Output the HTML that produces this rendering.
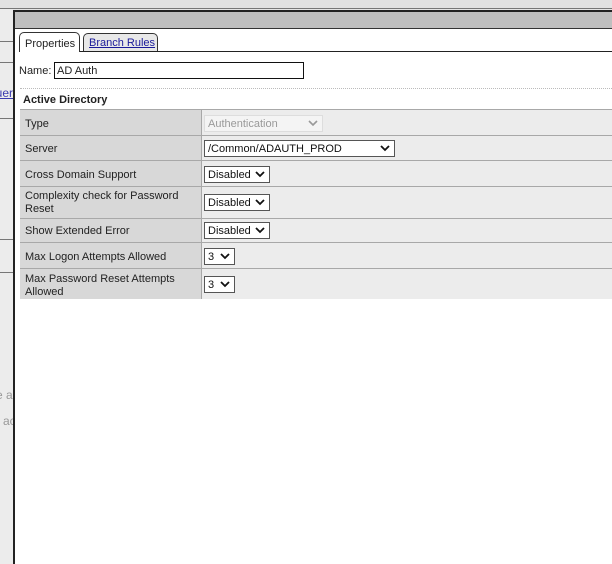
<!DOCTYPE html>
<html><head><style>
*{margin:0;padding:0;box-sizing:border-box}
body{width:612px;height:564px;background:#e6e6e6;font-family:"Liberation Sans",Tahoma,sans-serif;font-size:11px;color:#222;position:relative;overflow:hidden}
.abs{position:absolute;white-space:nowrap}
.sel{position:absolute;background:#fff;border:1px solid #555;height:17px;font-size:11px;line-height:16px;padding-left:3px;color:#111;white-space:nowrap}
.sel svg{position:absolute;right:4px;top:4px}
.lab{position:absolute;left:20px;width:181px;background:#d8d8d8;border-bottom:1px solid #a8a8a8;padding-left:5px;font-size:11px;line-height:13px;white-space:nowrap}
.val{position:absolute;left:202px;width:410px;background:#ececec;border-bottom:1px solid #a8a8a8}
</style></head><body>
<div class="abs" style="left:0;top:0;width:612px;height:8px;background:#e2e2e2"></div>
<div class="abs" style="left:0;top:8px;width:612px;height:1px;background:#777"></div>
<div class="abs" style="left:0;top:9px;width:13px;height:555px;background:#ececec"></div>
<div class="abs" style="left:0;top:41px;width:13px;height:1px;background:#777"></div>
<div class="abs" style="left:0;top:62px;width:13px;height:1px;background:#777"></div>
<div class="abs" style="left:0;top:118px;width:13px;height:1px;background:#777"></div>
<div class="abs" style="left:0;top:239px;width:13px;height:1px;background:#777"></div>
<div class="abs" style="left:0;top:272px;width:13px;height:1px;background:#777"></div>
<div class="abs" style="left:0;top:86px;font-size:12px;color:#3b3bb0;text-decoration:underline;width:13px;overflow:hidden;direction:rtl">uer</div>
<div class="abs" style="left:-4px;top:388px;font-size:12px;color:#999">e ar</div>
<div class="abs" style="left:3px;top:414px;font-size:12px;color:#999">ac</div>
<div class="abs" style="left:13px;top:10px;width:599px;height:554px;background:#fff;border-left:2px solid #222;border-top:2px solid #222"></div>
<div class="abs" style="left:15px;top:12px;width:597px;height:17px;background:#bfbfbf;border-bottom:1px solid #333"></div>
<div class="abs" style="left:19px;top:32px;width:61px;height:20px;border:1px solid #333;border-bottom:none;border-radius:5px 5px 0 0;background:#fff;font-size:11px;padding:5px 0 0 5px">Properties</div>
<div class="abs" style="left:83px;top:33px;width:75px;height:18px;border:1px solid #333;border-bottom:none;border-radius:5px 5px 0 0;background:#e8e8e8;font-size:11px;padding:3px 0 0 5px;color:#1a1a9a;text-decoration:underline">Branch Rules</div>
<div class="abs" style="left:80px;top:51px;width:532px;height:1px;background:#222"></div>
<div class="abs" style="left:19px;top:65px;font-size:11px">Name:</div>
<div class="abs" style="left:54px;top:62px;width:250px;height:17px;border:1px solid #111;font-size:11px;padding:2px 2px">AD Auth</div>
<div class="abs" style="left:20px;top:88px;width:592px;border-top:1px dotted #bbb"></div>
<div class="abs" style="left:23px;top:94px;font-size:11px;font-weight:bold">Active Directory</div>
<div class="abs" style="left:201px;top:110px;width:1px;height:189px;background:#a8a8a8"></div>
<div class="abs" style="left:20px;top:109px;width:592px;height:1px;background:#a8a8a8"></div>

<div class="lab" style="top:110px;height:26px;padding-top:8px">Type</div><div class="val" style="top:110px;height:26px"></div>
<div class="lab" style="top:136px;height:25px;padding-top:7px">Server</div><div class="val" style="top:136px;height:25px"></div>
<div class="lab" style="top:161px;height:26px;padding-top:8px">Cross Domain Support</div><div class="val" style="top:161px;height:26px"></div>
<div class="lab" style="top:187px;height:32px;padding-top:3px">Complexity check for Password<br>Reset</div><div class="val" style="top:187px;height:32px"></div>
<div class="lab" style="top:219px;height:24px;padding-top:6px">Show Extended Error</div><div class="val" style="top:219px;height:24px"></div>
<div class="lab" style="top:243px;height:26px;padding-top:8px">Max Logon Attempts Allowed</div><div class="val" style="top:243px;height:26px"></div>
<div class="lab" style="top:269px;height:30px;border-bottom:none;padding-top:4px">Max Password Reset Attempts<br>Allowed</div><div class="val" style="top:269px;height:30px;border-bottom:none"></div>

<div class="sel" style="left:204px;top:115px;width:119px;border-color:#ddd;background:#f4f4f4;color:#999">Authentication<svg width="10" height="7"><path d="M1 1l4 4 4-4" stroke="#999" stroke-width="1.6" fill="none"/></svg></div>
<div class="sel" style="left:204px;top:140px;width:191px">/Common/ADAUTH_PROD<svg width="10" height="7"><path d="M1 1l4 4 4-4" stroke="#111" stroke-width="1.8" fill="none"/></svg></div>
<div class="sel" style="left:204px;top:166px;width:66px">Disabled<svg width="10" height="7"><path d="M1 1l4 4 4-4" stroke="#111" stroke-width="1.8" fill="none"/></svg></div>
<div class="sel" style="left:204px;top:194px;width:66px">Disabled<svg width="10" height="7"><path d="M1 1l4 4 4-4" stroke="#111" stroke-width="1.8" fill="none"/></svg></div>
<div class="sel" style="left:204px;top:222px;width:66px">Disabled<svg width="10" height="7"><path d="M1 1l4 4 4-4" stroke="#111" stroke-width="1.8" fill="none"/></svg></div>
<div class="sel" style="left:204px;top:248px;width:31px">3<svg width="10" height="7"><path d="M1 1l4 4 4-4" stroke="#111" stroke-width="1.8" fill="none"/></svg></div>
<div class="sel" style="left:204px;top:276px;width:31px">3<svg width="10" height="7"><path d="M1 1l4 4 4-4" stroke="#111" stroke-width="1.8" fill="none"/></svg></div>
</body></html>
